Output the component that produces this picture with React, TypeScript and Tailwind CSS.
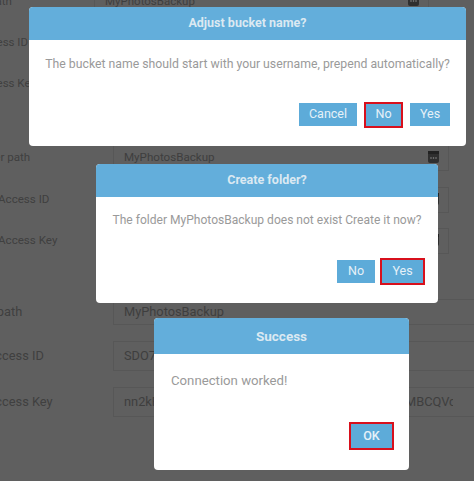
import type { ReactNode } from 'react';

const font = "font-['Roboto',sans-serif]";

function KeyIcon() {
  return (
    <svg width="11" height="12" viewBox="0 0 11 12" className="absolute right-[9px] top-[5px]">
      <rect x="0" y="0" width="11" height="12" rx="2" fill="#2f2f2f" />
      <rect x="0" y="0" width="11" height="3" fill="#222222" />
      <circle cx="3" cy="7" r="0.8" fill="#8a8a8a" />
      <circle cx="5.5" cy="7" r="0.8" fill="#8a8a8a" />
      <circle cx="8" cy="7" r="0.8" fill="#8a8a8a" />
    </svg>
  );
}

function Row({ label, value, labelClass, fieldClass, icon }: {
  label: string;
  value?: string;
  labelClass: string;
  fieldClass: string;
  icon?: boolean;
}) {
  return (
    <div className="flex items-center">
      <div className={`shrink-0 whitespace-nowrap text-[#404040] ${labelClass}`}>{label}</div>
      <div className={`relative flex shrink-0 items-center border border-[#575757] pl-[10px] text-[#3e3e3e] whitespace-nowrap ${fieldClass}`}>
        <span className="block max-w-[329px] overflow-hidden">{value}</span>
        {icon && <KeyIcon />}
      </div>
    </div>
  );
}

function Dialog({ title, className, headerClass, children, buttons }: {
  title: string;
  className: string;
  headerClass: string;
  children: ReactNode;
  buttons: ReactNode;
}) {
  return (
    <div className={`absolute flex flex-col overflow-hidden rounded-[4px] bg-white ${className}`}>
      <div className={`flex shrink-0 items-center justify-center bg-[#63aedb] font-bold text-[#dbe9f2] ${headerClass}`}>
        {title}
      </div>
      <div className="flex-1">{children}</div>
      {buttons}
    </div>
  );
}

function Btn({ label, className }: { label: string; className: string }) {
  return (
    <button className={`flex items-center justify-center bg-[#5dabd9] text-[12.5px] text-[#e6f1f8] ${className}`}>
      {label}
    </button>
  );
}

const msg = 'whitespace-nowrap text-[#9a9a9a]';

export default function App() {
  return (
    <div className={`relative h-[481px] w-[474px] overflow-hidden bg-[#5f5f5f] ${font}`}>
      {/* form behind the dialogs */}
      <div className="flex flex-col">
        <div className="-mt-[12px] flex flex-col gap-[14px] -ml-[23px] text-[11.5px]">
          <Row label="Folder path" labelClass="w-[117px] -ml-[23px]" fieldClass="h-[27px] w-[335px] ml-[23px]" value="MyPhotosBackup" icon />
          <Row label="Access ID" labelClass="w-[117px]" fieldClass="h-[27px] w-[335px]" />
          <Row label="Access Key" labelClass="w-[117px]" fieldClass="h-[27px] w-[335px]" />
        </div>
        <div className="mt-[48px] flex flex-col gap-[15.5px] -ml-[2px] text-[11.6px]">
          <Row label="Folder path" labelClass="w-[115px] -ml-[26px]" fieldClass="h-[26px] w-[336px] ml-[26px]" value="MyPhotosBackup" icon />
          <Row label="Access ID" labelClass="w-[115px]" fieldClass="h-[26px] w-[336px]" icon />
          <Row label="Access Key" labelClass="w-[115px]" fieldClass="h-[26px] w-[336px]" icon />
        </div>
        <div className="mt-[44.5px] flex flex-col gap-[16px] -ml-[13px] text-[12.8px]">
          <Row label="Folder path" labelClass="w-[126px] -ml-[29px]" fieldClass="h-[26px] w-[380px] ml-[29px]" value="MyPhotosBackup" />
          <Row label="Access ID" labelClass="w-[126px]" fieldClass="h-[30px] w-[380px]" value="SDO7" />
          <Row label="Access Key" labelClass="w-[126px]" fieldClass="h-[30px] w-[380px]" value="nn2kFz8QpLw4TxYc7RvHs1GdU0eJqAoTnKzw8trMBCQVc" />
        </div>
      </div>

      <Dialog
        title="Adjust bucket name?"
        className="left-[29px] top-[7px] h-[139px] w-[437px]"
        headerClass="h-[33px] text-[12.5px]"
        buttons={
          <div className="flex items-center justify-end gap-[9px] pb-[20px] pr-[16px]">
            <Btn label="Cancel" className="h-[23px] w-[58px]" />
            <Btn label="No" className="h-[22px] w-[35px] outline-2 outline-[#d8101c]" />
            <Btn label="Yes" className="h-[23px] w-[40px]" />
          </div>
        }
      >
        <p className={`mt-[15px] text-center text-[12.25px] ${msg}`}>
          The bucket name should start with your username, prepend automatically?
        </p>
      </Dialog>

      <Dialog
        title="Create folder?"
        className="left-[96px] top-[164px] h-[139px] w-[342px]"
        headerClass="h-[33px] text-[12.5px]"
        buttons={
          <div className="flex items-center justify-end gap-[7px] pb-[20px] pr-[15px]">
            <Btn label="No" className="h-[23px] w-[38px]" />
            <Btn label="Yes" className="h-[23px] w-[41px] outline-2 outline-[#d8101c]" />
          </div>
        }
      >
        <p className={`mt-[14px] text-center text-[12.05px] ${msg}`}>
          The folder MyPhotosBackup does not exist Create it now?
        </p>
      </Dialog>

      <Dialog
        title="Success"
        className="left-[154px] top-[318px] h-[152px] w-[255px]"
        headerClass="h-[36px] text-[13.5px]"
        buttons={
          <div className="flex justify-end pb-[22px] pr-[17px]">
            <Btn label="OK" className="h-[24px] w-[41px] font-medium outline-2 outline-[#d8101c]" />
          </div>
        }
      >
        <p className={`ml-[17px] mt-[17px] text-[13.2px] ${msg}`}>Connection worked!</p>
      </Dialog>
    </div>
  );
}
